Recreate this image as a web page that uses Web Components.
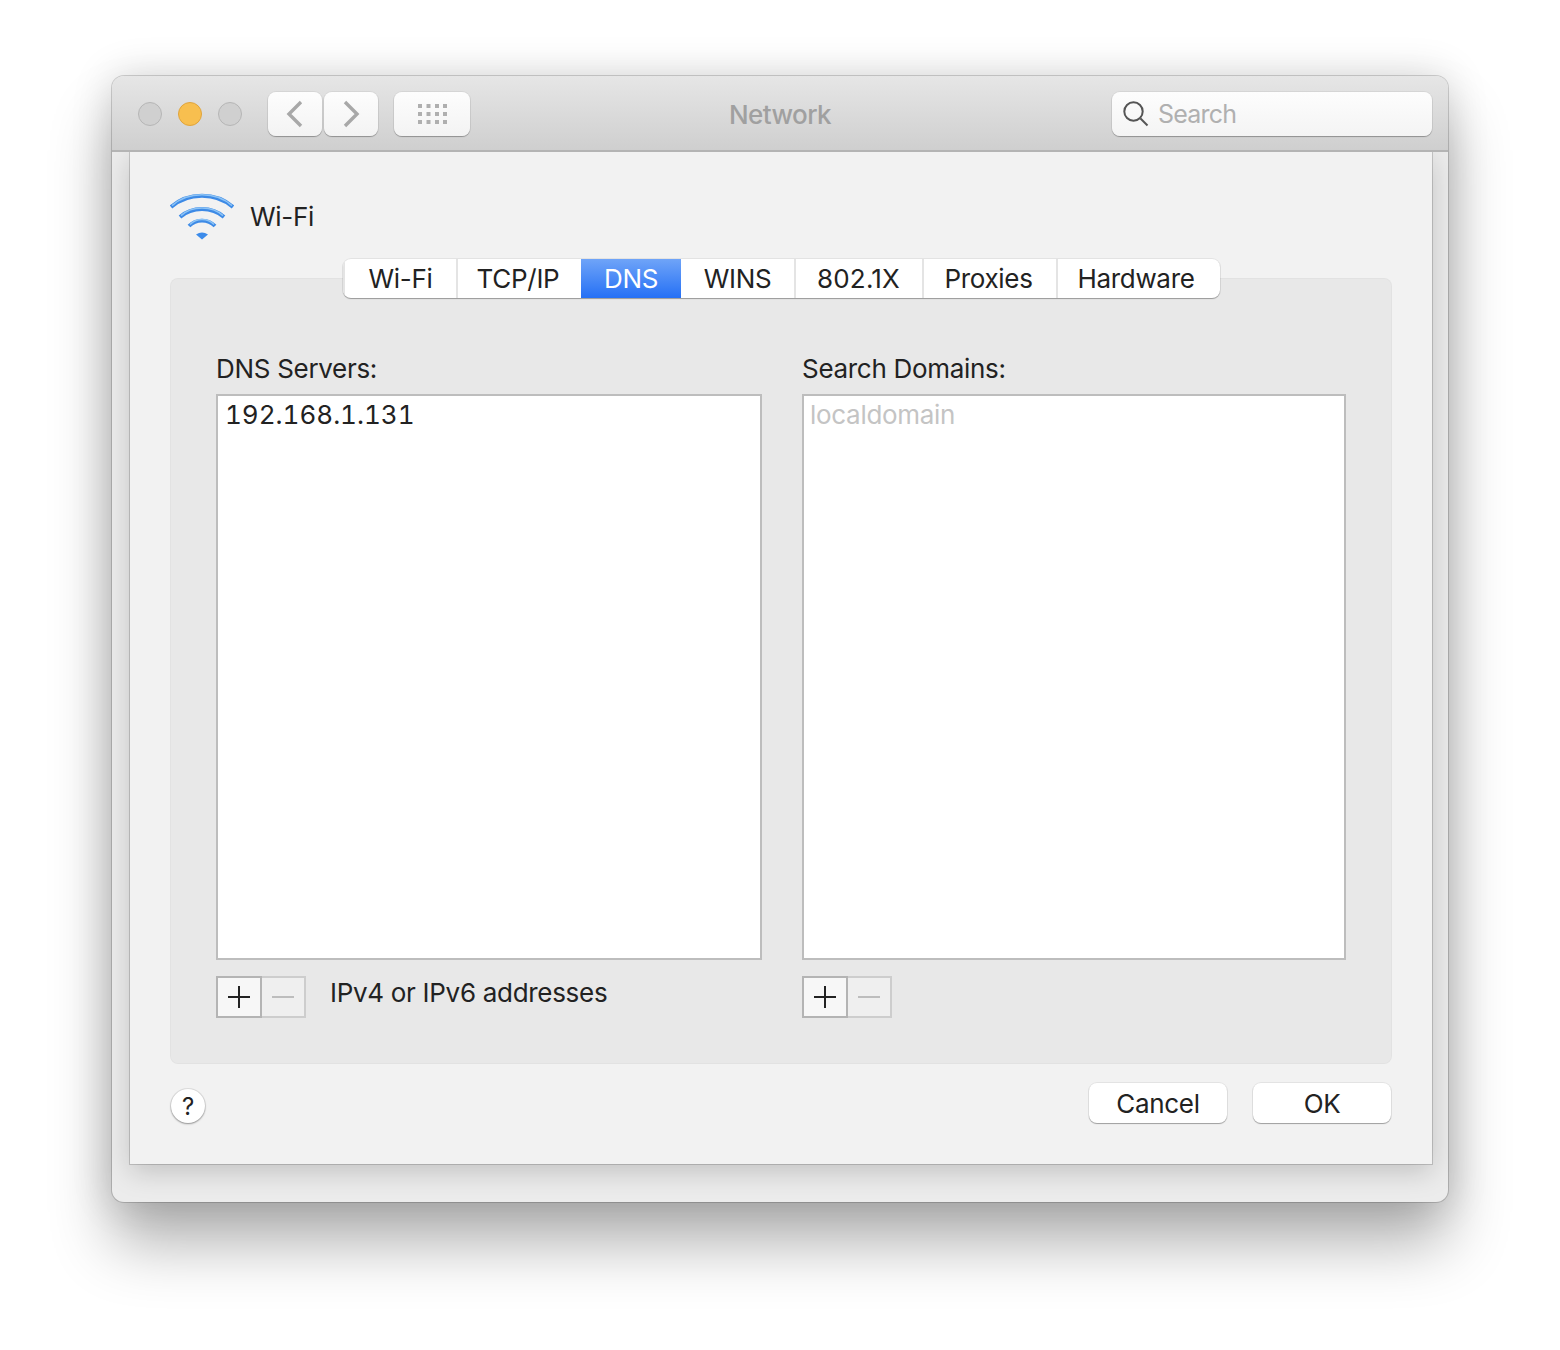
<!DOCTYPE html>
<html>
<head>
<meta charset="utf-8">
<title>Network</title>
<style>
  html, body { margin: 0; background: #fff; }
  body { width: 1560px; height: 1350px; overflow: hidden; font-family: Inter, "Liberation Sans", sans-serif; color: #222; letter-spacing: -.3px; }
</style>
</head>
<body>
<mac-window>
  <span slot="title">Network</span>
  <mac-sheet>
    <wifi-header>Wi-Fi</wifi-header>
    <tab-panel>
      <span slot="tab">Wi-Fi</span>
      <span slot="tab">TCP/IP</span>
      <span slot="tab" data-active>DNS</span>
      <span slot="tab">WINS</span>
      <span slot="tab">802.1X</span>
      <span slot="tab">Proxies</span>
      <span slot="tab">Hardware</span>
      <list-column label="DNS Servers:" value="192.168.1.131" hint="IPv4 or IPv6 addresses"></list-column>
      <list-column label="Search Domains:" value="localdomain" disabled></list-column>
    </tab-panel>
    <sheet-footer></sheet-footer>
  </mac-sheet>
</mac-window>

<script>
class MacWindow extends HTMLElement {
  constructor() {
    super();
    this.attachShadow({ mode: 'open' }).innerHTML = `
      <style>
        :host { display: block; width: 1336px; height: 1126px; margin: 76px 0 0 112px; box-sizing: border-box;
          background: #ececec; border-radius: 12px; box-shadow: 0 42px 62px rgba(0,0,0,.30), 0 0 42px rgba(0,0,0,.16), 0 0 0 1px rgba(0,0,0,.16); overflow: hidden; }
        .bar { height: 76px; box-sizing: border-box; display: flex; align-items: center; position: relative; padding: 2px 16px 0 26px;
          background: linear-gradient(#e6e6e6, #cfcfcf); border-bottom: 2px solid #b4b4b4; }
        .lights { display: flex; gap: 16px; margin-right: 26px; }
        .light { width: 24px; height: 24px; box-sizing: border-box; border-radius: 50%; background: #d0d0d0; border: 1px solid #b6b6b6; }
        .light.min { background: #f8bf4f; border-color: #e0a43c; }
        .btn { height: 44px; box-sizing: border-box; background: linear-gradient(#fdfdfd, #f3f3f3); border-radius: 8px; display: flex; align-items: center; justify-content: center;
          box-shadow: 0 0 0 1px rgba(0,0,0,.05), 0 1px 1px rgba(0,0,0,.28); }
        .nav { width: 54px; }
        .nav + .nav { margin-left: 2px; margin-right: 16px; }
        .grid { width: 76px; }
        .title { position: absolute; left: 0; right: 0; text-align: center; font-size: 26px; font-weight: 500; color: #a0a0a0; letter-spacing: -.55px; top: 23px; }
        .search { margin-left: auto; width: 320px; height: 44px; box-sizing: border-box; position: relative; z-index: 1; background: linear-gradient(#fdfdfd, #f4f4f4); border-radius: 8px;
          box-shadow: 0 0 0 1px rgba(0,0,0,.05), 0 1px 1px rgba(0,0,0,.28); display: flex; align-items: center; padding-left: 11px; gap: 9px; font-size: 25px; letter-spacing: -.8px; color: #b0b0b0; }
        .body { height: 1012px; padding: 0 16px 0 18px; }
      </style>
      <div class="bar">
        <div class="lights"><div class="light"></div><div class="light min"></div><div class="light"></div></div>
        <div class="btn nav"><svg width="18" height="28" viewBox="0 0 18 28" fill="none" stroke="#a8a8a8" stroke-width="3.4"><path d="M15 2 3 14l12 12"/></svg></div>
        <div class="btn nav"><svg width="18" height="28" viewBox="0 0 18 28" fill="none" stroke="#a8a8a8" stroke-width="3.4"><path d="m3 2 12 12L3 26"/></svg></div>
        <div class="btn grid"><svg width="30" height="22" viewBox="0 0 30 22" fill="#afafaf">
          ${[0, 8, 16].map((y) => [1, 9.500, 18, 26].map((x) => `<rect x="${x}" y="${y + 1}" width="4" height="4"/>`).join('')).join('')}
        </svg></div>
        <div class="title"><slot name="title"></slot></div>
        <div class="search">
          <svg width="26" height="26" viewBox="0 0 26 26" fill="none" stroke="#555" stroke-width="2"><circle cx="10.500" cy="10.500" r="9.200"/><path d="m17.500 17.500 7 7"/></svg>
          <span>Search</span>
        </div>
      </div>
      <div class="body"><slot></slot></div>`;
  }
}

class MacSheet extends HTMLElement {
  constructor() {
    super();
    this.attachShadow({ mode: 'open' }).innerHTML = `
      <style>
        :host { display: block; height: 1012px; box-sizing: border-box; padding: 0 40px; background: #f2f2f2;
          box-shadow: 0 0 0 1px rgba(0,0,0,.16), 0 8px 26px rgba(0,0,0,.18); }
      </style>
      <slot></slot>`;
  }
}

class WifiHeader extends HTMLElement {
  constructor() {
    super();
    this.attachShadow({ mode: 'open' }).innerHTML = `
      <style>
        :host { display: flex; align-items: flex-start; height: 126px; box-sizing: border-box; padding-top: 40px; font-size: 26px; color: #222; }
        svg { margin-right: 16px; }
        span { margin-top: 9px; line-height: 32px; }
      </style>
      <svg width="64" height="50" viewBox="0 0 64 50" fill="none">
        <g stroke="#3d8ae6" stroke-width="3.800">
          <path d="M1 15C18 0 46 0 63 15"/>
          <path d="M10 25C22 14.300 42 14.300 54 25"/>
          <path d="M19 34C26 26.700 38 26.700 45 34"/>
        </g>
        <g stroke="#8cc3f5" stroke-width="1.500" transform="translate(0 -.9)">
          <path d="M2 14.500C18 0 46 0 62 14.500"/>
          <path d="M11 24.500C22 14.300 42 14.300 53 24.500"/>
          <path d="M20 33.500C26 26.700 38 26.700 44 33.500"/>
        </g>
        <path d="M26 42.500Q32 38.500 38 42.500L32 47.500z" fill="#3c8bea"/>
      </svg>
      <span><slot></slot></span>`;
  }
}

class TabPanel extends HTMLElement {
  constructor() {
    super();
    this.attachShadow({ mode: 'open' }).innerHTML = `
      <style>
        :host { display: block; height: 786px; box-sizing: border-box; background: #e8e8e8; border-radius: 8px; box-shadow: inset 0 0 0 1px rgba(0,0,0,.025); padding: 0 45px 0 46px; }
        .tabs { display: flex; position: relative; top: -19px; height: 40px; margin-left: 127px; }
        .cols { display: grid; grid-template-columns: 546px 544px; column-gap: 40px; margin-top: 35px; }
      </style>
      <div class="tabs"><seg-tabs></seg-tabs></div>
      <div class="cols"><slot></slot></div>`;
    const seg = this.shadowRoot.querySelector('seg-tabs');
    this.querySelectorAll('[slot=tab]').forEach((t) => seg.addTab(t.textContent, t.hasAttribute('data-active')));
  }
}

class SegTabs extends HTMLElement {
  static WIDTHS = { 'Wi-Fi': 113, 'TCP/IP': 125, DNS: 100, WINS: 113, '802.1X': 128, Proxies: 134, Hardware: 164 };
  // labels sit a little left of centre in the longer segments
  static NUDGE = { 'TCP/IP': 3, '802.1X': 1, Proxies: 3, Hardware: 6 };
  constructor() {
    super();
    this.attachShadow({ mode: 'open' }).innerHTML = `
      <style>
        :host { display: flex; height: 39px; box-sizing: border-box; background: #fff; border-radius: 8px; overflow: hidden;
          box-shadow: 0 0 0 1px rgba(0,0,0,.06), 0 1px 1px rgba(0,0,0,.3); font-size: 26px; color: #222; }
        div { box-sizing: border-box; display: flex; align-items: center; justify-content: center; border-left: 2px solid #e4e4e4; }
        div:first-child { border-left: 0; }
        div.on { background: linear-gradient(#6fa4f8, #2570f5); color: #fff; border-left: 0; }
        div.on + div { border-left: 0; }
      </style>`;
  }
  addTab(text, active) {
    const d = document.createElement('div');
    d.textContent = text;
    d.style.width = SegTabs.WIDTHS[text] + 'px';
    d.style.paddingRight = (SegTabs.NUDGE[text] || 0) + 'px';
    if (/\d/.test(text)) d.style.letterSpacing = '.2px';
    if (active) d.className = 'on';
    this.shadowRoot.appendChild(d);
  }
}

class ListColumn extends HTMLElement {
  connectedCallback() {
    const dis = this.hasAttribute('disabled');
    const hint = this.getAttribute('hint');
    this.attachShadow({ mode: 'open' }).innerHTML = `
      <style>
        :host { display: block; font-size: 26px; color: #222; }
        .label { height: 41px; line-height: 32px; }
        .list { height: 566px; box-sizing: border-box; background: #fff; border: 2px solid #bdbdbd; padding: 3px ${dis ? 6 : 7}px; line-height: 32px; color: ${dis ? '#c4c4c4' : '#222'};
          ${dis ? '' : "font-feature-settings: 'tnum'; letter-spacing: 0;"} }
        .row { display: flex; margin-top: 16px; }
        .hint { margin: 1px 0 0 24px; line-height: 32px; }
        .pm { display: flex; height: 42px; }
        .pm div { width: 46px; box-sizing: border-box; display: flex; align-items: center; justify-content: center; }
        .plus { background: #f7f7f7; border: 2px solid #b4b4b4; }
        .minus { width: 44px !important; background: #efefef; border: 2px solid #cdcdcd; border-left: 0; }
      </style>
      <div class="label">${this.getAttribute('label')}</div>
      <div class="list">${this.getAttribute('value')}</div>
      <div class="row">
        <div class="pm">
          <div class="plus"><svg width="24" height="24" viewBox="0 0 24 24" stroke="#222" stroke-width="2"><path d="M12 1v22M1 12h22"/></svg></div>
          <div class="minus"><svg width="24" height="24" viewBox="0 0 24 24" stroke="#bdbdbd" stroke-width="2"><path d="M1 12h22"/></svg></div>
        </div>
        ${hint ? `<div class="hint">${hint}</div>` : ''}
      </div>`;
  }
}

class SheetFooter extends HTMLElement {
  constructor() {
    super();
    this.attachShadow({ mode: 'open' }).innerHTML = `
      <style>
        :host { display: flex; align-items: flex-start; padding: 19px 1px 0 0; font-size: 26px; color: #222; }
        .help { width: 34px; height: 34px; margin: 6px 0 0 1px; box-sizing: border-box; border-radius: 50%; background: #fff; display: flex; align-items: center; justify-content: center; font-size: 24px;
          box-shadow: 0 0 0 1px rgba(0,0,0,.08), 0 1px 2px rgba(0,0,0,.35); }
        .push { flex: 1; }
        .b { width: 138px; height: 40px; box-sizing: border-box; background: #fff; border-radius: 8px; display: flex; align-items: center; justify-content: center;
          box-shadow: 0 0 0 1px rgba(0,0,0,.06), 0 1px 1px rgba(0,0,0,.3); }
        .b + .b { margin-left: 26px; }
      </style>
      <div class="help">?</div>
      <div class="push"></div>
      <div class="b">Cancel</div>
      <div class="b">OK</div>`;
  }
}

customElements.define('seg-tabs', SegTabs);
customElements.define('mac-window', MacWindow);
customElements.define('mac-sheet', MacSheet);
customElements.define('wifi-header', WifiHeader);
customElements.define('tab-panel', TabPanel);
customElements.define('list-column', ListColumn);
customElements.define('sheet-footer', SheetFooter);
</script>
</body>
</html>
